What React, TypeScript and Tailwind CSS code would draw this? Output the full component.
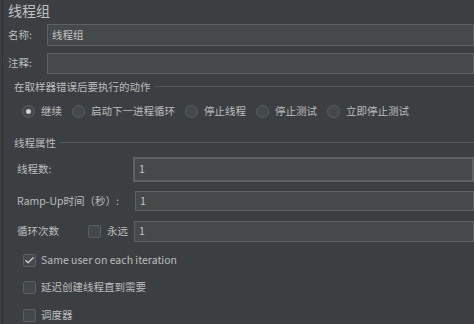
import { Check } from "lucide-react";

const font = { fontFamily: '"Noto Sans CJK SC", "Noto Sans", sans-serif' };

function Field({ value, className = "" }: { value?: string; className?: string }) {
  return (
    <div
      className={`flex flex-1 items-center border border-[#5f6264] bg-[#45494a] px-[4px] text-[10.5px] text-[#c4c4c4] ${className}`}
    >
      {value}
    </div>
  );
}

function Radio({ label, checked }: { label: string; checked?: boolean }) {
  return (
    <div className="flex items-center gap-[6px]">
      <span className="flex h-[13px] w-[13px] items-center justify-center rounded-full border border-[#5c5f61] bg-[#43484a]">
        {checked && <span className="h-[5px] w-[5px] rounded-full bg-[#cfcfcf]" />}
      </span>
      <span>{label}</span>
    </div>
  );
}

function Box({ checked }: { checked?: boolean }) {
  return (
    <span className="flex h-[13px] w-[13px] shrink-0 items-center justify-center rounded-[2px] border border-[#5c5f61] bg-[#43484a]">
      {checked && <Check className="h-[11px] w-[11px] text-[#c8c8c8]" strokeWidth={3} />}
    </span>
  );
}

function Legend({ title, lineOffset }: { title: string; lineOffset: string }) {
  return (
    <div className="flex h-[14px] items-center gap-[4px] pl-[11px]">
      <span className="shrink-0">{title}</span>
      <span className={`h-px flex-1 bg-[#55585a] ${lineOffset}`} />
    </div>
  );
}

export default function App() {
  return (
    <div
      className="h-[324px] w-[474px] overflow-hidden bg-[#3c3f41] pl-[2px] text-[10.5px] leading-none text-[#bdbdbd]"
      style={font}
    >
      <div className="flex h-full flex-col border-l border-[#2e3032]">
        <div className="h-[20px] pl-[5px] text-[14px] leading-[20px] text-[#c2c2c2]">
          线程组
        </div>

        <div className="mt-[4px] flex h-[22px] items-center">
          <span className="w-[44px] pl-[5px]">名称:</span>
          <Field value="线程组" className="h-full" />
        </div>
        <div className="mt-[7px] flex h-[21px] items-center">
          <span className="w-[44px] pl-[5px]">注释:</span>
          <Field className="h-full" />
        </div>

        <div className="mt-[6px]">
          <Legend title="在取样器错误后要执行的动作" lineOffset="-mt-[2px]" />
        </div>
        <div className="mt-[11px] flex h-[13px] items-center gap-[10px] pl-[19px]">
          <Radio label="继续" checked />
          <Radio label="启动下一进程循环" />
          <Radio label="停止线程" />
          <Radio label="停止测试" />
          <Radio label="立即停止测试" />
        </div>

        <div className="mt-[18px]">
          <Legend title="线程属性" lineOffset="-mt-[1px]" />
        </div>

        <div className="mt-[7px] flex h-[25px] items-center">
          <span className="w-[130px] pl-[14px]">线程数:</span>
          <Field value="1" className="h-full border-2 border-[#4f7cab]" />
        </div>
        <div className="mt-[9px] flex h-[20px] items-center">
          <span className="w-[132px] pl-[14px]">Ramp-Up时间（秒）:</span>
          <Field value="1" className="h-full" />
        </div>
        <div className="mt-[10px] flex h-[21px] items-center">
          <span className="w-[85px] pl-[14px]">循环次数</span>
          <Box />
          <span className="ml-[6px] w-[27px]">永远</span>
          <Field value="1" className="h-full" />
        </div>

        <div className="mt-[12px] flex h-[13px] items-center gap-[5px] pl-[20px]">
          <Box checked />
          <span>Same user on each iteration</span>
        </div>
        <div className="mt-[14px] flex h-[13px] items-center gap-[5px] pl-[20px]">
          <Box />
          <span>延迟创建线程直到需要</span>
        </div>
        <div className="mt-[15px] flex h-[13px] items-center gap-[5px] pl-[20px]">
          <Box />
          <span>调度器</span>
        </div>
      </div>
    </div>
  );
}
